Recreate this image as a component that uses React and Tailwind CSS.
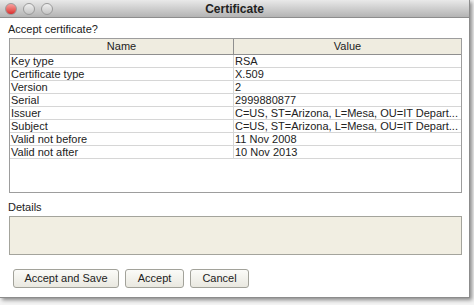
const rows = [
  ["Key type", "RSA"],
  ["Certificate type", "X.509"],
  ["Version", "2"],
  ["Serial", "2999880877"],
  ["Issuer", "C=US, ST=Arizona, L=Mesa, OU=IT Depart..."],
  ["Subject", "C=US, ST=Arizona, L=Mesa, OU=IT Depart..."],
  ["Valid not before", "11 Nov 2008"],
  ["Valid not after", "10 Nov 2013"],
];

const Light = ({ color }) => (
  <div className={`w-[12px] h-[12px] rounded-full border border-[#9a9a9a] ${color}`} />
);

const Btn = ({ w, children }) => (
  <button className={`${w} h-[19px] rounded-[3px] border border-[#a2a29a] bg-gradient-to-b from-[#fbfbf8] to-[#e9e8e0] text-[11px] text-[#222] leading-none`}>
    {children}
  </button>
);

export default function App() {
  return (
    <div className="w-[474px] h-[305px] bg-[#f4f4f4] overflow-hidden" style={{ fontFamily: "'Liberation Sans', Arial, sans-serif" }}>
      <div className="w-[470px] h-[298px] bg-white border-r border-b border-[#8c8c8c] shadow-[2px_2px_4px_rgba(0,0,0,0.45)] flex flex-col">
        <div className="h-[18px] bg-gradient-to-b from-[#e9e9e9] to-[#b4b4b4] border-b border-[#8d8d8d] flex items-center relative">
          <div className="flex gap-[6px] pl-[5px]">
            <Light color="bg-gradient-to-b from-[#f7a0a0] to-[#d9242a]" />
            <Light color="bg-gradient-to-b from-[#f0f0f0] to-[#c4c4c4]" />
            <Light color="bg-gradient-to-b from-[#f0f0f0] to-[#c4c4c4]" />
          </div>
          <div className="absolute inset-0 flex items-center justify-center text-[12px] font-bold text-[#222]">Certificate</div>
        </div>

        <div className="pl-[8px] pr-[8px] text-[11px] text-[#222]">
          <div className="h-[20px] flex items-end pb-[1px]">Accept certificate?</div>
          <div className="ml-[1px] w-[453px] h-[155px] border border-[#9d9d9d] bg-white">
            <div className="flex h-[16px] bg-[#efece0] border-b border-[#8f8f8f]">
              <div className="w-[224px] border-r border-[#8f8f8f] flex items-center justify-center">Name</div>
              <div className="flex-1 flex items-center justify-center">Value</div>
            </div>
            {rows.map(([k, v]) => (
              <div key={k} className="flex h-[13px] border-b border-[#d6d6d6] leading-[12px]">
                <div className="w-[224px] border-r border-[#d6d6d6] pl-[1px]">{k}</div>
                <div className="flex-1 pl-[1px]">{v}</div>
              </div>
            ))}
          </div>
          <div className="h-[22px] flex items-end pb-[1px] mt-[1px]">Details</div>
          <div className="ml-[1px] w-[453px] h-[39px] border border-[#a4a49c] bg-[#f1eee2]" />
          <div className="flex gap-[6px] ml-[5px] mt-[14px]">
            <Btn w="w-[106px]">Accept and Save</Btn>
            <Btn w="w-[59px]">Accept</Btn>
            <Btn w="w-[59px]">Cancel</Btn>
          </div>
        </div>
      </div>
    </div>
  );
}
